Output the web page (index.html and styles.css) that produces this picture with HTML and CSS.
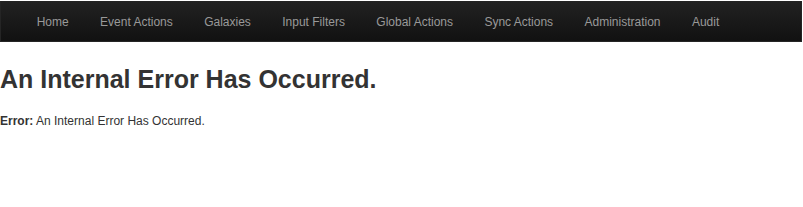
FILE: index.html
```html
<!DOCTYPE html>
<html>
<head>
<meta charset="utf-8">
<link rel="stylesheet" href="styles.css">
</head>
<body>
<div class="navbar">
  <ul class="nav">
    <li><a href="#">Home</a></li>
    <li><a href="#">Event Actions</a></li>
    <li><a href="#">Galaxies</a></li>
    <li><a href="#">Input Filters</a></li>
    <li><a href="#">Global Actions</a></li>
    <li><a href="#">Sync Actions</a></li>
    <li><a href="#">Administration</a></li>
    <li><a href="#">Audit</a></li>
  </ul>
</div>
<div class="content">
  <h2 class="title">An Internal Error Has Occurred.</h2>
  <p class="message"><strong>Error:</strong> An Internal Error Has Occurred.</p>
</div>
</body>
</html>
```
FILE: styles.css
```css
html, body {
  margin: 0;
  padding: 0;
  background: #fff;
}
body {
  font-family: "Liberation Sans", Arial, sans-serif;
  font-size: 12px;
  color: #333;
}
.navbar {
  margin-top: 1px;
  margin-right: 1px;
  height: 40px;
  background: linear-gradient(to bottom, #222222, #111111);
  border: 1px solid #252525;
  border-top: none;
  padding: 0 19px 0 20px;
}
.nav {
  list-style: none;
  margin: 0;
  padding: 0;
  display: flex;
}
.nav a {
  display: block;
  padding: 1px 15.7px 0;
  line-height: 40px;
  height: 39px;
  color: #999;
  text-decoration: none;
  font-size: 12px;
}
.content {
  padding: 0;
}
.title {
  margin: 22px 0 0 0;
  font-size: 25px;
  line-height: 30px;
  font-weight: bold;
  color: #333;
}
.message {
  margin: 18px 0 0 0;
  line-height: 18px;
}
```
